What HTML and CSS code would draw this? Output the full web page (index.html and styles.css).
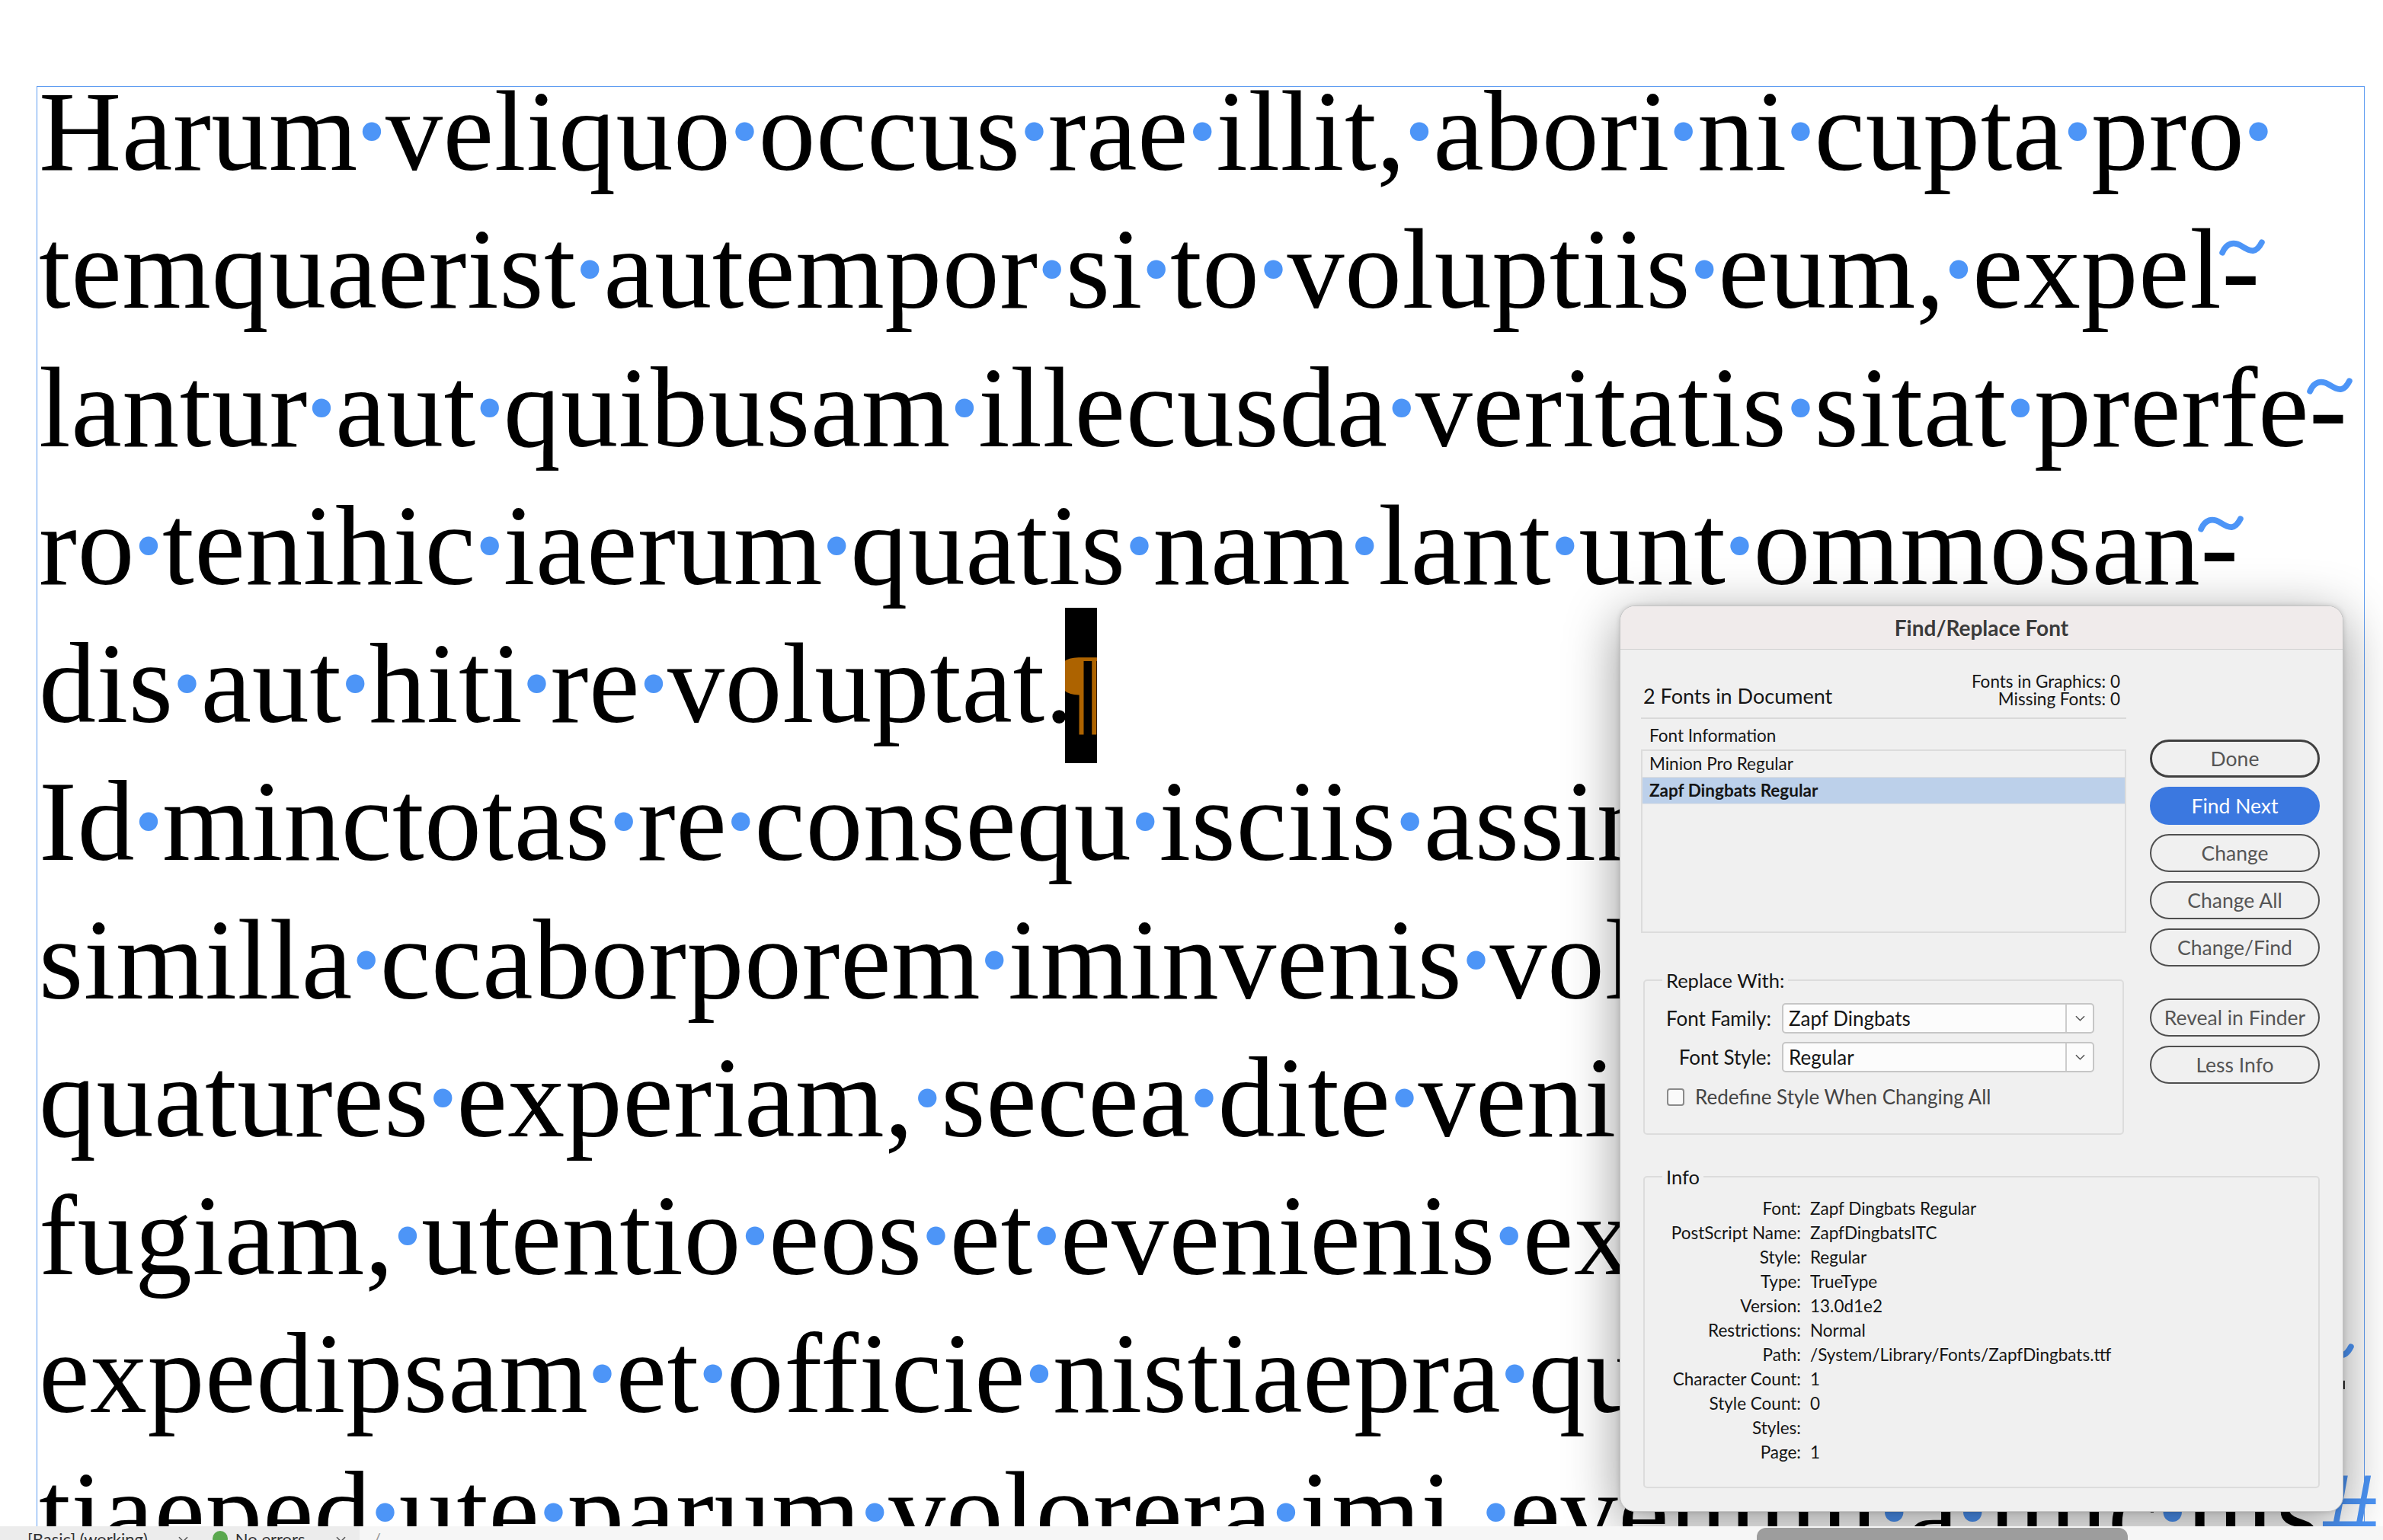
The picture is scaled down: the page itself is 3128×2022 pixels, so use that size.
FILE: index.html
```html
<!DOCTYPE html>
<html lang="en">
  <head>
    <meta charset="UTF-8" />
    <title>Find/Replace Font</title>
    <link rel="stylesheet" href="styles.css">
  </head>

  <body>
    <div class="app">
      <main class="canvas">
        <div class="frame">
          <div class="story">
            <p class="ln">Harum<i>·</i>veliquo<i>·</i>occus<i>·</i>rae<i>·</i>illit,<i>·</i>abori<i>·</i>ni<i>·</i>cupta<i>·</i>pro<i>·</i></p>
            <p class="ln">temquaerist<i>·</i>autempor<i>·</i>si<i>·</i>to<i>·</i>voluptiis<i>·</i>eum,<i>·</i>expel<span class="hy">-<svg class="tilde" viewBox="0 0 58 24"><path d="M4 19 C9 7 18 4 29 11 S47 20 54 6"/></svg></span></p>
            <p class="ln">lantur<i>·</i>aut<i>·</i>quibusam<i>·</i>illecusda<i>·</i>veritatis<i>·</i>sitat<i>·</i>prerfe<span class="hy">-<svg class="tilde" viewBox="0 0 58 24"><path d="M4 19 C9 7 18 4 29 11 S47 20 54 6"/></svg></span></p>
            <p class="ln">ro<i>·</i>tenihic<i>·</i>iaerum<i>·</i>quatis<i>·</i>nam<i>·</i>lant<i>·</i>unt<i>·</i>ommosan<span class="hy">-<svg class="tilde" viewBox="0 0 58 24"><path d="M4 19 C9 7 18 4 29 11 S47 20 54 6"/></svg></span></p>
            <p class="ln">dis<i>·</i>aut<i>·</i>hiti<i>·</i>re<i>·</i>voluptat.<span class="sel"><span>¶</span></span></p>
            <p class="ln">Id<i>·</i>minctotas<i>·</i>re<i>·</i>consequ<i>·</i>isciis<i>·</i>assinvel<i>·</i>ipsaepe<i>·</i></p>
            <p class="ln">similla<i>·</i>ccaborporem<i>·</i>iminvenis<i>·</i>volorum<i>·</i>nonsedi<i>·</i></p>
            <p class="ln">quatures<i>·</i>experiam,<i>·</i>secea<i>·</i>dite<i>·</i>venisque<i>·</i>nos<i>·</i></p>
            <p class="ln">fugiam,<i>·</i>utentio<i>·</i>eos<i>·</i>et<i>·</i>evenienis<i>·</i>ex<i>·</i>et<i>·</i>quam<i>·</i></p>
            <p class="ln">expedipsam<i>·</i>et<i>·</i>officie<i>·</i>nistiaepra<i>·</i>quiatur<i>·</i>santiaepe<span class="hy">-<svg class="tilde" viewBox="0 0 58 24"><path d="M4 19 C9 7 18 4 29 11 S47 20 54 6"/></svg></span></p>
            <p class="ln">tiaeped<i>·</i>ute<i>·</i>parum<i>·</i>volorera<i>·</i>imi,<i>·</i>evenimi<i>·</i>a<i>·</i>imc<i>·</i>nis<i class="eos">#</i></p>
          </div>
        </div>

        <section class="dlg">
          <header class="dlg-title">Find/Replace Font</header>
          <div class="dlg-body">
            <div class="dlg-main">
              <div class="doc-head">
                <span class="doc-count">2 Fonts in Document</span>
                <span class="doc-stats">Fonts in Graphics: 0<br />Missing Fonts: 0</span>
              </div>
              <div class="list-label">Font Information</div>
              <ul class="font-list">
                <li>Minion Pro Regular</li>
                <li class="is-sel">Zapf Dingbats Regular</li>
              </ul>
              <fieldset class="group replace">
                <legend>Replace With:</legend>
                <div class="field">
                  <label>Font Family:</label>
                  <div class="select">
                    <span>Zapf Dingbats</span>
                    <b><svg viewBox="0 0 14 8"><path d="M1 1 L7 7 L13 1"/></svg></b>
                  </div>
                </div>
                <div class="field">
                  <label>Font Style:</label>
                  <div class="select">
                    <span>Regular</span>
                    <b><svg viewBox="0 0 14 8"><path d="M1 1 L7 7 L13 1"/></svg></b>
                  </div>
                </div>
                <div class="check"><span class="box"></span>Redefine Style When Changing All</div>
              </fieldset>
            </div>

            <div class="dlg-actions">
              <button class="btn btn-default">Done</button>
              <button class="btn btn-primary">Find Next</button>
              <button class="btn">Change</button>
              <button class="btn">Change All</button>
              <button class="btn">Change/Find</button>
              <button class="btn btn-gap">Reveal in Finder</button>
              <button class="btn">Less Info</button>
            </div>

            <fieldset class="group info">
              <legend>Info</legend>
              <dl>
                <dt>Font:</dt><dd>Zapf Dingbats Regular</dd>
                <dt>PostScript Name:</dt><dd>ZapfDingbatsITC</dd>
                <dt>Style:</dt><dd>Regular</dd>
                <dt>Type:</dt><dd>TrueType</dd>
                <dt>Version:</dt><dd>13.0d1e2</dd>
                <dt>Restrictions:</dt><dd>Normal</dd>
                <dt>Path:</dt><dd>/System/Library/Fonts/ZapfDingbats.ttf</dd>
                <dt>Character Count:</dt><dd>1</dd>
                <dt>Style Count:</dt><dd>0</dd>
                <dt>Styles:</dt><dd></dd>
                <dt>Page:</dt><dd>1</dd>
              </dl>
            </fieldset>
          </div>
        </section>
      </main>

      <footer class="status">
        <div class="status-left">
          <span class="st-name">[Basic] (working)</span>
          <svg class="st-chev" viewBox="0 0 14 8"><path d="M1 1 L7 7 L13 1"/></svg>
          <span class="st-dot"></span>
          <span class="st-err">No errors</span>
          <svg class="st-chev" viewBox="0 0 14 8"><path d="M1 1 L7 7 L13 1"/></svg>
        </div>
        <div class="status-right">
          <span class="st-slash">/</span>
          <span class="thumb"></span>
        </div>
      </footer>
    </div>
  </body>
</html>
```

FILE: styles.css
```css
html,
body {
  margin: 0;
  background: #fff;
}

.app {
  width: 3128px;
  height: 2022px;
  overflow: hidden;
}

.canvas {
  position: relative;
  height: 2004px;
  overflow: hidden;
  background: #fff;
}

/* text frame */
.frame {
  margin: 113px 0 0 48px;
  width: 3056px;
  height: 1891px;
  box-sizing: border-box;
  border: 1px solid #5e9cf1;
  border-bottom: none;
}

.story {
  margin-top: -32px;
  padding-left: 2px;
  font: 150px/181.25px "Liberation Serif", "Times New Roman", serif;
  letter-spacing: 0.5px;
  color: #000;
  white-space: nowrap;
}

.ln {
  margin: 0;
}

/* space markers: narrower than the serif's middle dot */
.ln i {
  font-style: normal;
  font-weight: bold;
  color: #4d95f7;
  margin-left: -7px;
  letter-spacing: -7px;
}

.ln i.eos {
  font-weight: normal;
  margin-left: 0;
  letter-spacing: 0;
}

.hy {
  position: relative;
}

.tilde {
  position: absolute;
  left: -3px;
  top: 42px;
  width: 60px;
  height: 25px;
  fill: none;
  stroke: #4d95f7;
  stroke-width: 7.5;
  stroke-linecap: round;
}

.sel {
  display: inline-block;
  width: 42px;
  height: 204px;
  margin: -10px 0 -54px -12px;
  overflow: hidden;
  background: #000;
  color: #ad6300;
  font-size: 130px;
  line-height: 212px;
  text-indent: -10px;
}

/* dialog */
.dlg {
  position: absolute;
  left: 2126px;
  top: 795px;
  width: 950px;
  height: 1190px;
  box-sizing: border-box;
  border-radius: 20px;
  background: #f0f0f0;
  border: 1px solid #c4c4c4;
  box-shadow: 0 16px 70px rgba(0, 0, 0, 0.42), 0 0 6px rgba(0, 0, 0, 0.15);
  font-family: "Lato", "Liberation Sans", sans-serif;
  color: #151515;
  overflow: hidden;
}

.dlg-title {
  height: 56px;
  line-height: 56px;
  border-bottom: 1px solid #d2d2d2;
  background: #f0ebeb;
  text-align: center;
  font-size: 28px;
  font-weight: bold;
  color: #3b3b3b;
}

.dlg-body {
  display: grid;
  grid-template-columns: 637px 223px;
  column-gap: 31px;
  padding: 0 31px 0 27px;
  align-items: start;
}

.doc-head {
  display: flex;
  justify-content: space-between;
  align-items: flex-end;
  margin-top: 30px;
  padding: 0 8px 13px 3px;
  border-bottom: 2px solid #d9d9d9;
}

.doc-count {
  font-size: 27px;
  line-height: 30px;
}

.doc-stats {
  font-size: 22.5px;
  line-height: 23px;
  text-align: right;
}

.list-label {
  margin-top: 10px;
  padding-left: 11px;
  font-size: 22.5px;
  line-height: 24px;
}

.font-list {
  margin: 6px 0 0;
  padding: 0;
  list-style: none;
  height: 241px;
  box-sizing: border-box;
  border: 2px solid #dcdcdc;
}

.font-list li {
  height: 34px;
  line-height: 34px;
  padding-left: 9px;
  font-size: 22.5px;
  border-bottom: 1px solid #dedede;
}

.font-list li.is-sel {
  background: #bcd0ea;
  font-weight: bold;
  border-bottom-color: #e4e4e4;
}

.group {
  margin: 0 3px;
  padding: 0 20px 36px 23px;
  border: 2px solid #dcdcdc;
  border-radius: 5px;
  min-width: 0;
}

.group legend {
  padding: 0 5px;
  font-size: 25.5px;
  line-height: 30px;
}

.replace {
  margin-top: 47px;
}

.field {
  display: flex;
  align-items: center;
  margin-top: 11px;
  font-size: 26px;
}

.field:first-of-type {
  margin-top: 15px;
}

.field label {
  width: 143px;
  text-align: right;
  margin-right: 14px;
  white-space: nowrap;
}

.select {
  display: flex;
  width: 410px;
  height: 40px;
  box-sizing: border-box;
  border: 2px solid #c6c6c6;
  border-radius: 5px;
  background: #fcfcfc;
}

.select span {
  flex: 1;
  padding-left: 7px;
  line-height: 36px;
}

.select b {
  width: 34px;
  border-left: 2px solid #cdcdcd;
  display: flex;
  align-items: center;
  justify-content: center;
}

.select svg,
.st-chev {
  width: 13px;
  height: 8px;
  fill: none;
  stroke: #555;
  stroke-width: 1.6;
}

.check {
  display: flex;
  align-items: center;
  margin-top: 20px;
  height: 24px;
  font-size: 26px;
  color: #444;
  white-space: nowrap;
}

.check .box {
  width: 19px;
  height: 19px;
  flex: none;
  margin: 0 14px 0 6px;
  border: 2px solid #8a8a8a;
  border-radius: 4px;
  background: #fafafa;
}

.dlg-actions {
  display: flex;
  flex-direction: column;
  gap: 12px;
  margin-top: 118px;
}

.btn {
  height: 50px;
  box-sizing: border-box;
  border: 2px solid #4f4f4f;
  border-radius: 25px;
  background: transparent;
  font: 26.5px "Lato", "Liberation Sans", sans-serif;
  color: #555;
  padding: 0;
  white-space: nowrap;
}

.btn-default {
  border-width: 3px;
  border-color: #404040;
}

.btn-primary {
  background: #3b78e0;
  border-color: #3b78e0;
  color: #fff;
}

.btn-gap {
  margin-top: 30px;
}

.info {
  grid-column: 1 / -1;
  margin: 40px 0 0 3px;
  padding-bottom: 29px;
}

.info dl {
  display: grid;
  grid-template-columns: 182px 1fr;
  column-gap: 12px;
  margin: 11px 0 0;
  font-size: 22.5px;
  line-height: 32px;
}

.info dt {
  text-align: right;
  white-space: nowrap;
}

.info dd {
  margin: 0;
}

/* status bar */
.status {
  display: flex;
  height: 18px;
  overflow: hidden;
  background: #f6f6f6;
  font: 22px/26px "Lato", "Liberation Sans", sans-serif;
  color: #333;
}

.status-left {
  display: flex;
  align-items: flex-start;
  width: 472px;
  padding-top: 4px;
  box-sizing: border-box;
  background: #ececec;
}

.st-name {
  margin-left: 36px;
}

.st-chev {
  margin: 9px 0 0 40px;
}

.st-dot {
  width: 20px;
  height: 20px;
  margin: 2px 10px 0 32px;
  border-radius: 50%;
  background: #5aa84e;
}

.status-right {
  flex: 1;
  display: flex;
  align-items: flex-start;
}

.st-slash {
  margin: 4px 0 0 18px;
  color: #999;
}

.thumb {
  width: 487px;
  height: 20px;
  margin: 2px 0 0 1806px;
  border-radius: 12px 12px 0 0;
  background: #9d9d9d;
}
```
